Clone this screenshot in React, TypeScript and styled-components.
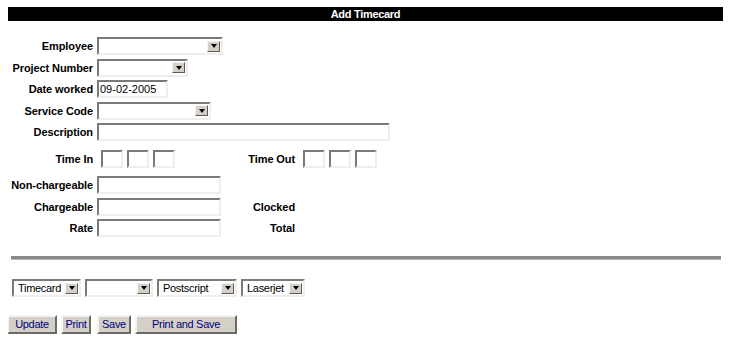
import React from 'react';
import styled, { createGlobalStyle } from 'styled-components';

const Global = createGlobalStyle`
  html, body { background: #fff; }
  body {
    margin: 7px 8px;
    font-family: "Liberation Sans", Arial, Helvetica, sans-serif;
    font-size: 11px;
    color: #000;
  }
`;

const TitleBar = styled.div`
  height: 14px;
  background: #000;
  color: #fff;
  font-weight: bold;
  font-size: 11px;
  line-height: 14px;
  text-align: center;
  letter-spacing: -0.3px;
`;

const Form = styled.div`
  display: flex;
  flex-direction: column;
  gap: 3.5px;
  margin-top: 16px;
`;

const Row = styled.div<{ $mt?: number }>`
  display: grid;
  grid-template-columns: 85px 140px 54px auto;
  column-gap: 4px;
  height: 18px;
  align-items: center;
  margin-top: ${p => p.$mt ?? 0}px;
`;

const Label = styled.div`
  font-weight: bold;
  font-size: 11px;
  text-align: right;
  letter-spacing: -0.1px;
  white-space: nowrap;
`;

const Field = styled.div<{ $span?: boolean }>`
  display: flex;
  align-items: center;
  height: 18px;
  ${p => (p.$span ? 'grid-column: 2 / -1;' : '')}
`;

const TextInput = styled.div<{ $w: number }>`
  box-sizing: border-box;
  width: ${p => p.$w}px;
  height: 18px;
  border-style: solid;
  border-width: 2px;
  border-color: #7a7a7a #f2ecec #f2ecec #7a7a7a;
  background: #fff;
  padding: 0 1px;
  font-size: 11px;
  line-height: 14px;
  letter-spacing: 0;
  white-space: nowrap;
  overflow: hidden;
`;

const TimeBoxes = styled.div`
  display: flex;
  gap: 4px;
  padding-left: 4px;
`;

const SelectBox = styled.div<{ $w: number }>`
  box-sizing: border-box;
  width: ${p => p.$w}px;
  height: 18px;
  border-style: solid;
  border-width: 2px;
  border-color: #7a7a7a #f2ecec #f2ecec #7a7a7a;
  background: #fff;
  display: flex;
  align-items: center;
  padding: 0 1px 0 4px;
`;

const SelectText = styled.span`
  flex: 1;
  font-size: 11px;
  letter-spacing: -0.3px;
  white-space: nowrap;
  overflow: hidden;
`;

const ArrowButton = styled.span`
  box-sizing: border-box;
  width: 13px;
  height: 11px;
  background: #d4d0c8;
  border-style: solid;
  border-width: 1px;
  border-color: #f4f4f4 #5a5a5a #5a5a5a #f4f4f4;
  display: flex;
  align-items: center;
  justify-content: center;

  &::after {
    content: '';
    width: 0;
    height: 0;
    border-left: 3.5px solid transparent;
    border-right: 3.5px solid transparent;
    border-top: 4px solid #000;
  }
`;

const Rule = styled.div`
  margin: 19px 2px 0 3px;
  height: 3px;
  background: #8a8a8a;
  border-bottom: 1px solid #b8b8b8;
`;

const SelectBar = styled.div`
  display: flex;
  gap: 4px;
  padding-left: 4px;
  margin-top: 19px;
`;

const ButtonBar = styled.div`
  display: flex;
  gap: 4px;
  margin: 18px 0 0 -1px;
`;

const Button = styled.button<{ $w: number; $mr?: number }>`
  box-sizing: border-box;
  width: ${p => p.$w}px;
  height: 19px;
  margin-right: ${p => p.$mr ?? 0}px;
  padding: 0;
  background: #d4d0c8;
  border-style: solid;
  border-width: 2px;
  border-color: #f4f4f4 #6a6a6a #6a6a6a #f4f4f4;
  color: #000080;
  font-family: "Liberation Sans", Arial, Helvetica, sans-serif;
  font-size: 11px;
  letter-spacing: -0.3px;
  line-height: 15px;
  text-align: center;
`;

const Select = ({ w, value = '' }: { w: number; value?: string }) => (
  <SelectBox $w={w}>
    <SelectText>{value}</SelectText>
    <ArrowButton />
  </SelectBox>
);

export default function App() {
  return (
    <>
      <Global />
      <TitleBar>Add Timecard</TitleBar>
      <Form>
        <Row>
          <Label>Employee</Label>
          <Field><Select w={126} /></Field>
        </Row>
        <Row>
          <Label>Project Number</Label>
          <Field><Select w={91} /></Field>
        </Row>
        <Row>
          <Label>Date worked</Label>
          <Field><TextInput $w={71}>09-02-2005</TextInput></Field>
        </Row>
        <Row>
          <Label>Service Code</Label>
          <Field><Select w={114} /></Field>
        </Row>
        <Row>
          <Label>Description</Label>
          <Field $span><TextInput $w={293} /></Field>
        </Row>
        <Row $mt={5.5}>
          <Label>Time In</Label>
          <Field>
            <TimeBoxes>
              <TextInput $w={22} />
              <TextInput $w={22} />
              <TextInput $w={22} />
            </TimeBoxes>
          </Field>
          <Label>Time Out</Label>
          <Field>
            <TimeBoxes>
              <TextInput $w={22} />
              <TextInput $w={22} />
              <TextInput $w={22} />
            </TimeBoxes>
          </Field>
        </Row>
        <Row $mt={4.5}>
          <Label>Non-chargeable</Label>
          <Field><TextInput $w={124} /></Field>
        </Row>
        <Row>
          <Label>Chargeable</Label>
          <Field><TextInput $w={124} /></Field>
          <Label>Clocked</Label>
        </Row>
        <Row>
          <Label>Rate</Label>
          <Field><TextInput $w={124} /></Field>
          <Label>Total</Label>
        </Row>
      </Form>
      <Rule />
      <SelectBar>
        <Select w={69} value="Timecard" />
        <Select w={68} />
        <Select w={80} value="Postscript" />
        <Select w={64} value="Laserjet" />
      </SelectBar>
      <ButtonBar>
        <Button $w={50}>Update</Button>
        <Button $w={30} $mr={2}>Print</Button>
        <Button $w={34}>Save</Button>
        <Button $w={102}>Print and Save</Button>
      </ButtonBar>
    </>
  );
}
